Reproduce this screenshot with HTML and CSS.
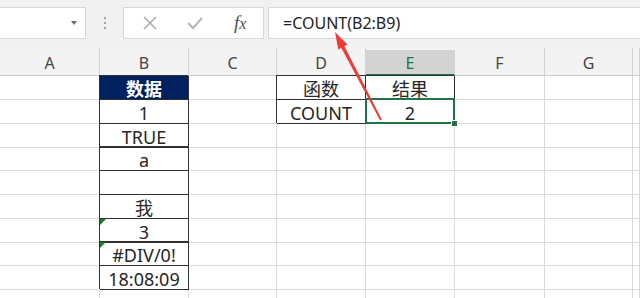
FILE: index.html
```html
<!DOCTYPE html>
<html lang="zh-CN">
<head>
  <meta charset="UTF-8">
  <meta name="viewport" content="width=device-width, initial-scale=1.0">
  <title>COUNT</title>
  <link rel="stylesheet" href="styles.css">
</head>
<body>

  <div class="toolbar">
    <div class="name-box">
      <span class="drop-arrow"></span>
    </div>

    <div class="grip">
      <span></span><span></span><span></span>
    </div>

    <div class="fx-box">
      <svg class="tool-icon" width="16" height="16" viewBox="0 0 16 16">
        <path d="M2 2 L14 14 M14 2 L2 14" stroke="#ababab" stroke-width="1.6" fill="none"/>
      </svg>
      <svg class="tool-icon" width="16" height="16" viewBox="0 0 16 16">
        <path d="M1 8 L6 13 L15 3" stroke="#b5b5b5" stroke-width="2" fill="none"/>
      </svg>
      <span class="fx">f<i>x</i></span>
    </div>

    <div class="formula">=COUNT(B2:B9)</div>
  </div>

  <div class="sheet">

    <div class="row head-row">
      <div class="col-head">A</div>
      <div class="col-head">B</div>
      <div class="col-head">C</div>
      <div class="col-head">D</div>
      <div class="col-head selected-head">E</div>
      <div class="col-head">F</div>
      <div class="col-head">G</div>
      <div class="col-head"></div>
    </div>

    <div class="row">
      <div class="cell"></div>
      <div class="cell bd title">数据</div>
      <div class="cell"></div>
      <div class="cell bd">函数</div>
      <div class="cell bd">结果</div>
      <div class="cell"></div>
      <div class="cell"></div>
      <div class="cell"></div>
    </div>

    <div class="row">
      <div class="cell"></div>
      <div class="cell bd">1</div>
      <div class="cell"></div>
      <div class="cell bd">COUNT</div>
      <div class="cell bd active">2</div>
      <div class="cell"></div>
      <div class="cell"></div>
      <div class="cell"></div>
    </div>

    <div class="row">
      <div class="cell"></div>
      <div class="cell bd">TRUE</div>
      <div class="cell"></div>
      <div class="cell"></div>
      <div class="cell"></div>
      <div class="cell"></div>
      <div class="cell"></div>
      <div class="cell"></div>
    </div>

    <div class="row">
      <div class="cell"></div>
      <div class="cell bd">a</div>
      <div class="cell"></div>
      <div class="cell"></div>
      <div class="cell"></div>
      <div class="cell"></div>
      <div class="cell"></div>
      <div class="cell"></div>
    </div>

    <div class="row">
      <div class="cell"></div>
      <div class="cell bd"></div>
      <div class="cell"></div>
      <div class="cell"></div>
      <div class="cell"></div>
      <div class="cell"></div>
      <div class="cell"></div>
      <div class="cell"></div>
    </div>

    <div class="row">
      <div class="cell"></div>
      <div class="cell bd">我</div>
      <div class="cell"></div>
      <div class="cell"></div>
      <div class="cell"></div>
      <div class="cell"></div>
      <div class="cell"></div>
      <div class="cell"></div>
    </div>

    <div class="row">
      <div class="cell"></div>
      <div class="cell bd flag">3</div>
      <div class="cell"></div>
      <div class="cell"></div>
      <div class="cell"></div>
      <div class="cell"></div>
      <div class="cell"></div>
      <div class="cell"></div>
    </div>

    <div class="row">
      <div class="cell"></div>
      <div class="cell bd flag">#DIV/0!</div>
      <div class="cell"></div>
      <div class="cell"></div>
      <div class="cell"></div>
      <div class="cell"></div>
      <div class="cell"></div>
      <div class="cell"></div>
    </div>

    <div class="row">
      <div class="cell"></div>
      <div class="cell bd">18:08:09</div>
      <div class="cell"></div>
      <div class="cell"></div>
      <div class="cell"></div>
      <div class="cell"></div>
      <div class="cell"></div>
      <div class="cell"></div>
    </div>

    <div class="row">
      <div class="cell"></div>
      <div class="cell"></div>
      <div class="cell"></div>
      <div class="cell"></div>
      <div class="cell"></div>
      <div class="cell"></div>
      <div class="cell"></div>
      <div class="cell"></div>
    </div>

  </div>

  <!-- red pointer drawn over the sheet -->
  <svg class="pointer" width="640" height="298" viewBox="0 0 640 298">
    <polygon fill="#ee3b33"
      points="335,32 347.5,44.6 344.4,46.3 381.8,119.6 380.2,120.4 341.4,47.9 338.3,49.5"/>
  </svg>

</body>
</html>
```

FILE: styles.css
```css
html{
  overflow: hidden;
}

body{
  margin: 0;
  width: 640px;
  height: 298px;
  overflow: hidden;
  background-color: #ffffff;
  font-family: "Noto Sans", "Noto Sans CJK SC", sans-serif;
  color: #262626;
  position: relative;
}


/* formula bar */

.toolbar{
  display: flex;
  align-items: flex-start;
  height: 48px;
  padding-top: 7px;
  box-sizing: border-box;
  background-color: #f1f1f1;
}

.name-box{
  width: 86px;
  height: 32px;
  box-sizing: border-box;
  background-color: #ffffff;
  border: 1px solid #d8d8d8;
  border-left: none;
  display: flex;
  justify-content: flex-end;
  align-items: center;
  padding-right: 8px;
}

.drop-arrow{
  width: 0;
  height: 0;
  border-left: 3px solid transparent;
  border-right: 3px solid transparent;
  border-top: 4px solid #6d6d6d;
  margin-top: -1px;
}

.grip{
  width: 37px;
  height: 32px;
  display: flex;
  flex-direction: column;
  align-items: center;
  justify-content: center;
  gap: 3px;
}

.grip span{
  width: 2px;
  height: 2px;
  background-color: #a0a0a0;
}

.fx-box{
  width: 141px;
  height: 32px;
  box-sizing: border-box;
  background-color: #ffffff;
  border: 1px solid #d8d8d8;
  display: flex;
  align-items: center;
  padding-left: 18px;
  gap: 29px;
}

.tool-icon{
  display: block;
}

.fx{
  font-family: "Liberation Serif", serif;
  font-style: italic;
  font-size: 19px;
  color: #505050;
  margin-left: 2px;
}

.fx i{
  font-size: 16px;
}

.formula{
  flex: 1;
  height: 32px;
  margin-left: 4px;
  box-sizing: border-box;
  background-color: #ffffff;
  border: 1px solid #d8d8d8;
  border-right: none;
  padding-left: 14px;
  font-size: 16px;
  line-height: 30px;
  color: #222222;
}


/* sheet */

.sheet{
  height: 250px;
  overflow: hidden;
}

.row{
  display: grid;
  grid-template-columns: 100px 89px 88px 89px 89px 90px 88px 1fr;
  height: 23.75px;
}

.head-row{
  height: 27px;
  background-color: #f3f3f3;
  border-bottom: 1px solid #c9c9c9;
}

.col-head{
  display: flex;
  justify-content: center;
  align-items: center;
  border-right: 1px solid #d2d2d2;
  font-size: 16px;
  line-height: 20px;
  color: #444444;
  padding-top: 3px;
}

.selected-head{
  background-color: #d3d3d3;
  color: #217346;
  border-bottom: 2px solid #217346;
  margin-bottom: -1px;
  margin-top: 2px;
  padding-top: 1px;
}

.cell{
  position: relative;
  box-sizing: border-box;
  border-right: 1px solid #dadada;
  border-bottom: 1px solid #dadada;
  display: flex;
  justify-content: center;
  align-items: center;
  font-size: 18px;
  line-height: 20px;
  padding-top: 3px;
  white-space: nowrap;
}

.bd{
  border-right-color: #303030;
  border-bottom-color: #303030;
  box-shadow: -1px -1px 0 #303030;
}

.title{
  background-color: #002060;
  color: #ffffff;
  font-weight: bold;
}

.flag::before{
  content: "";
  position: absolute;
  top: 0;
  left: 0;
  border-top: 6px solid #1e7a2e;
  border-right: 6px solid transparent;
}

.active::after{
  content: "";
  position: absolute;
  top: -2px;
  left: -1px;
  right: -1px;
  bottom: -1px;
  border: 2px solid #217346;
}

.active::before{
  content: "";
  position: absolute;
  right: -4px;
  bottom: -4px;
  width: 5px;
  height: 5px;
  background-color: #217346;
  border: 1px solid #ffffff;
  z-index: 1;
}

.pointer{
  position: absolute;
  top: 0;
  left: 0;
  pointer-events: none;
}
```
